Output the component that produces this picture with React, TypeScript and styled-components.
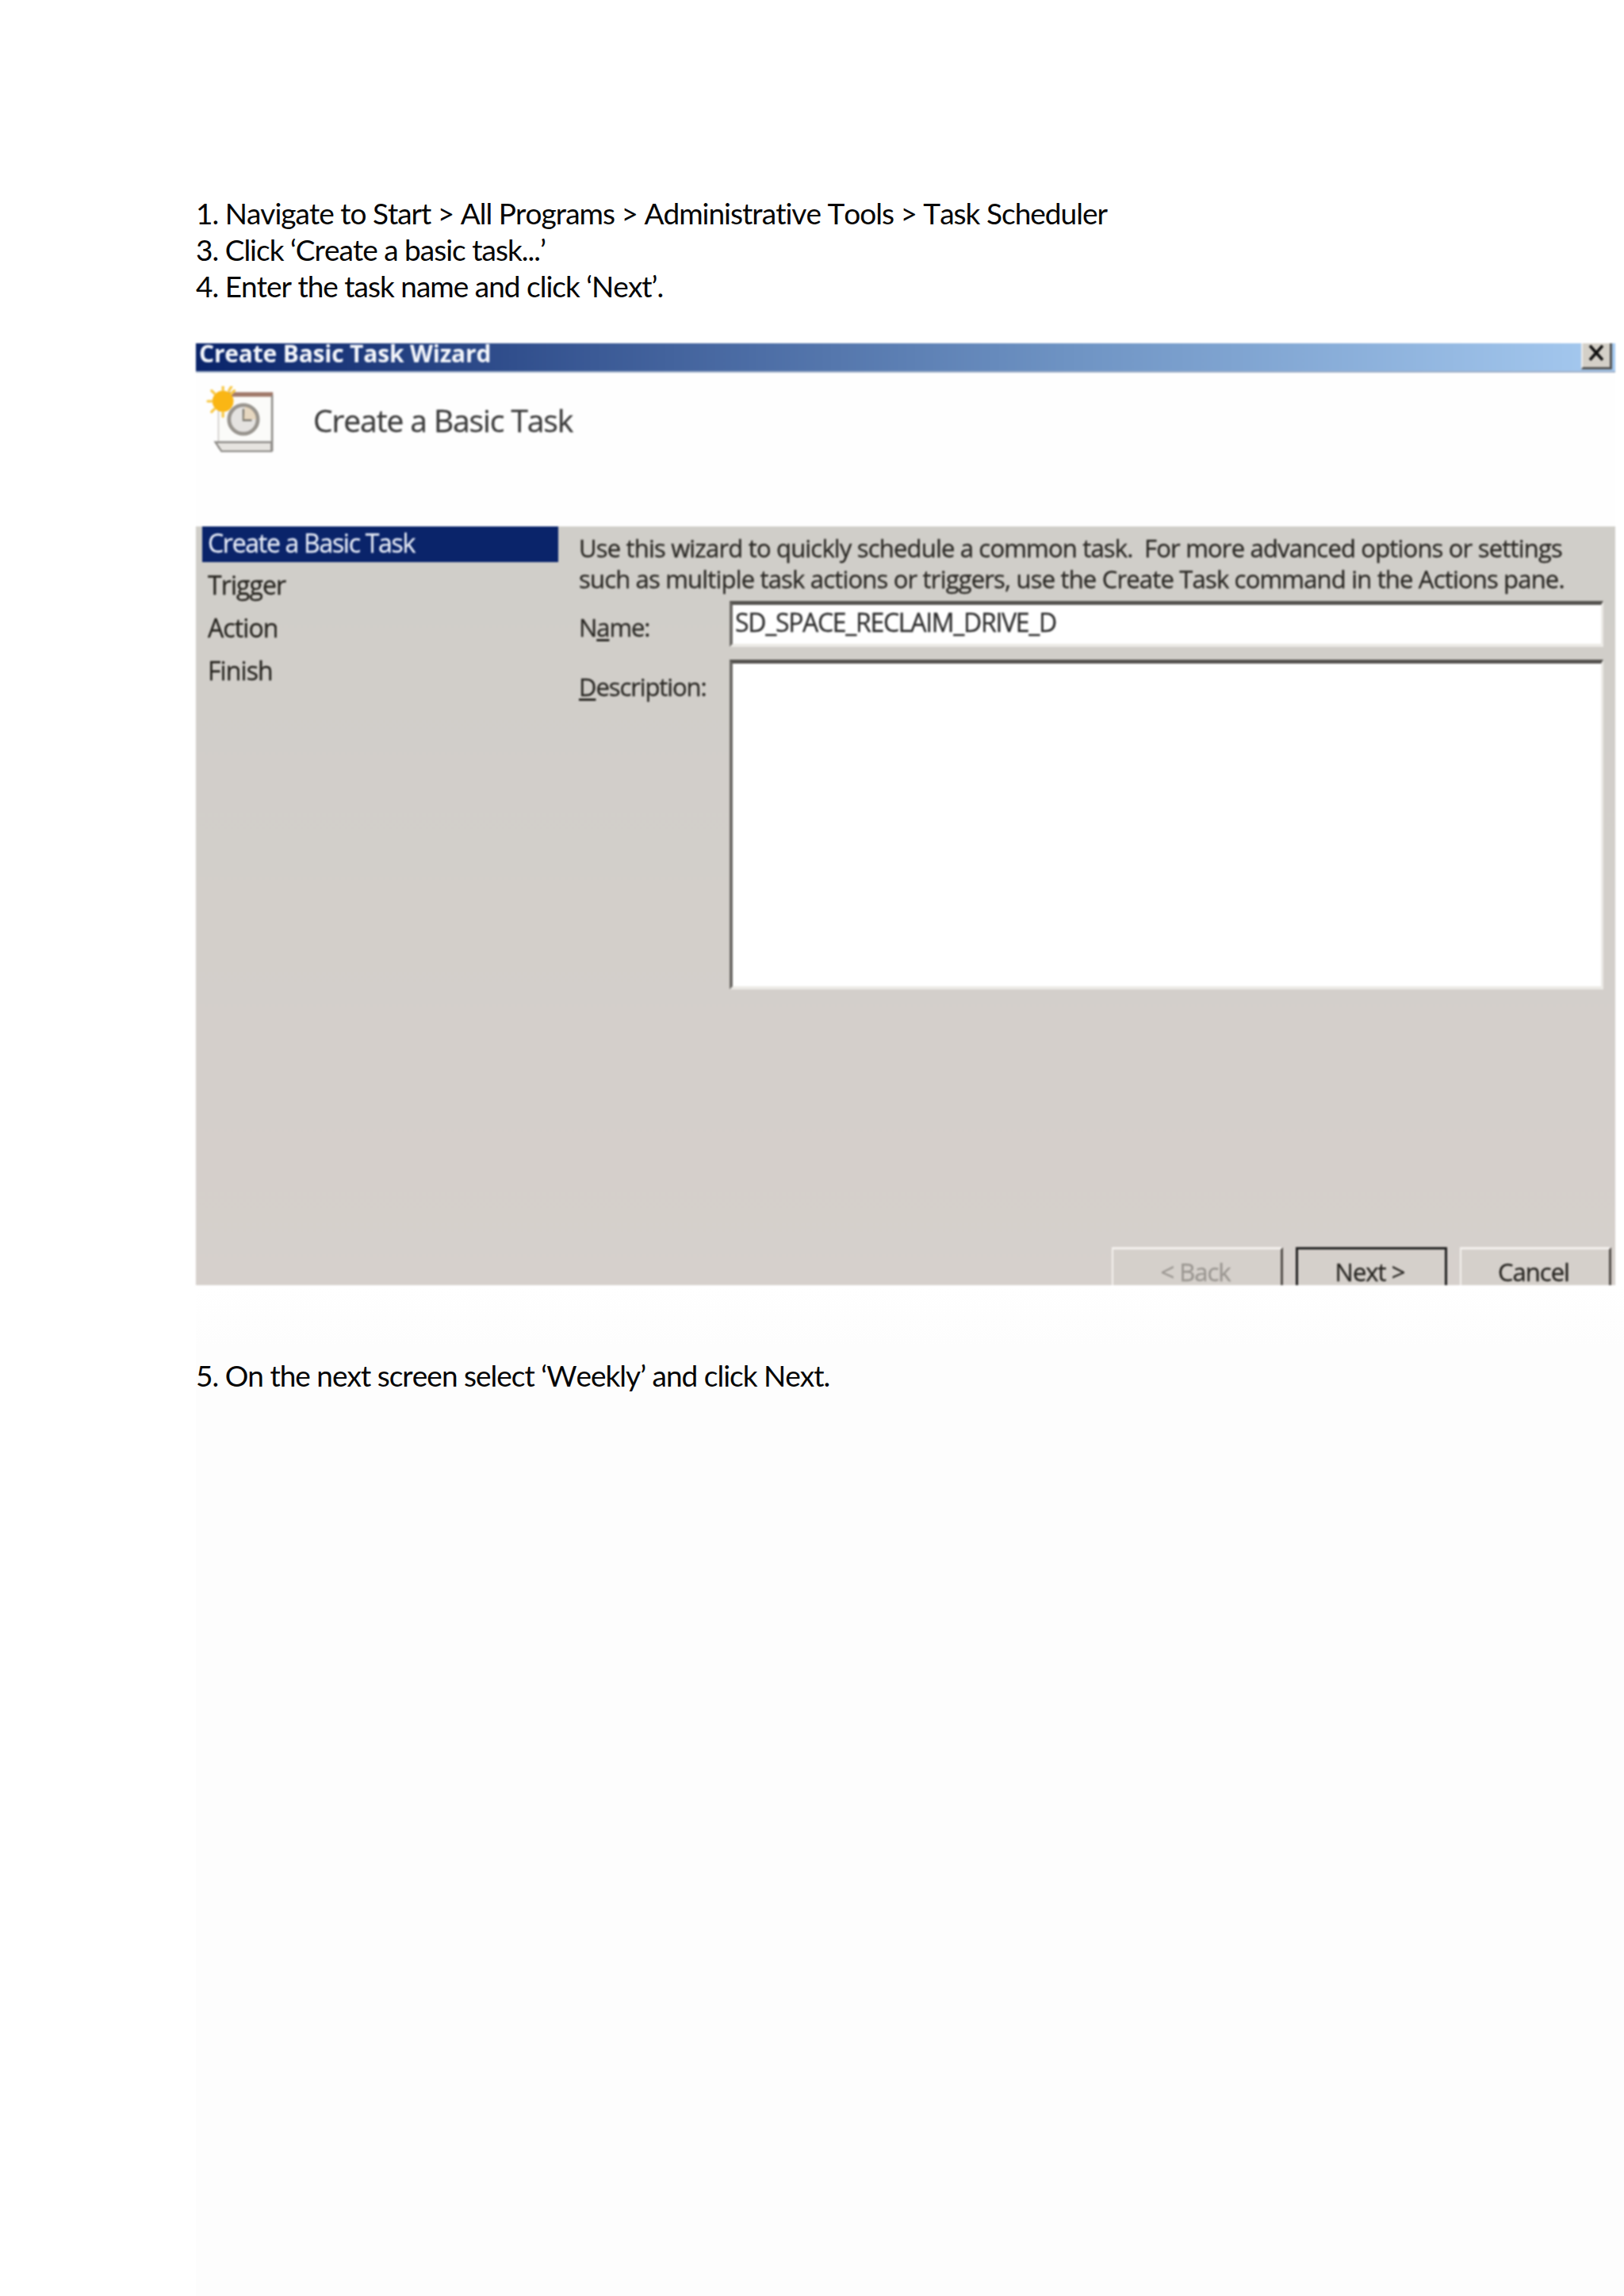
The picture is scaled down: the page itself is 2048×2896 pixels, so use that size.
import React from 'react';
import styled, { createGlobalStyle } from 'styled-components';

const GlobalStyle = createGlobalStyle`
  html, body { margin: 0; padding: 0; background: #ffffff; }
  body { font-family: "Lato", "Liberation Sans", sans-serif; color: #000; }
`;

const Page = styled.main`
  width: 2048px;
  height: 2896px;
  box-sizing: border-box;
  padding: 246px 11px 0 247px;
  overflow: hidden;
  background:
    linear-gradient(90deg, #ffffff 247px, transparent 247px),
    linear-gradient(#ffffff 1620px, #fdfdfd 1700px);
`;

const Steps = styled.div<{ $top?: number }>`
  display: flex;
  flex-direction: column;
  margin-top: ${(p) => p.$top ?? 0}px;
`;

const Step = styled.p`
  margin: 0;
  font-family: "Lato", "Liberation Sans", sans-serif;
  font-size: 37px;
  line-height: 46.2px;
  letter-spacing: -1px;
  font-kerning: none;
  font-variant-ligatures: none;
  color: #060606;
  white-space: pre;
`;

const Wizard = styled.section`
  width: 1790px;
  height: 1188px;
  margin-top: 48px;
  display: flex;
  flex-direction: column;
  overflow: hidden;
  background: #fefefe;
  font-family: "Open Sans", "Liberation Sans", sans-serif;
  filter: blur(0.9px);
`;

const TitleBar = styled.header`
  height: 37px;
  flex: none;
  display: flex;
  align-items: flex-start;
  justify-content: space-between;
  box-sizing: border-box;
  padding: 0 4px 0 4px;
  background: linear-gradient(90deg, #0a246a 0%, #3b5a96 28%, #6f94c4 62%, #a6caf0 100%);
  box-shadow: inset 0 -2px 0 #9fb0c8;
`;

const TitleText = styled.span`
  font-family: "Open Sans", "Liberation Sans", sans-serif;
  font-size: 30px;
  line-height: 26px;
  font-weight: 700;
  letter-spacing: -0.2px;
  color: #f4f6fb;
`;

const CloseButton = styled.button`
  width: 39px;
  height: 33px;
  margin: 0;
  padding: 0 0 6px;
  display: flex;
  align-items: center;
  justify-content: center;
  box-sizing: border-box;
  border: 0;
  border-right: 3px solid #555;
  border-bottom: 3px solid #555;
  border-left: 2px solid #eee;
  background: #d4d0c8;
`;

const Header = styled.div`
  height: 194px;
  flex: none;
  display: flex;
  align-items: flex-start;
  gap: 43px;
  box-sizing: border-box;
  padding: 17px 0 0 13px;
`;

const HeaderTitle = styled.h1`
  margin: 18px 0 0;
  font-family: "Open Sans", "Liberation Sans", sans-serif;
  font-size: 39px;
  line-height: 50px;
  font-weight: 400;
  letter-spacing: -1.1px;
  color: #3c3c3c;
  -webkit-text-stroke: 0.3px currentColor;
`;

const Body = styled.div`
  flex: 1;
  min-height: 0;
  display: grid;
  grid-template-columns: 457px 1fr;
  background: linear-gradient(#d0cec9, #d6d0cc);
  -webkit-text-stroke: 0.3px currentColor;
`;

const Sidebar = styled.nav`
  display: flex;
  flex-direction: column;
  padding-left: 8px;
`;

const SideItem = styled.div<{ $active?: boolean }>`
  width: 449px;
  height: ${(p) => (p.$active ? 45 : 54)}px;
  line-height: ${(p) => (p.$active ? 41 : 58)}px;
  box-sizing: border-box;
  padding-left: 7px;
  font-size: 32px;
  letter-spacing: ${(p) => (p.$active ? -1.3 : -0.9)}px;
  color: ${(p) => (p.$active ? '#e6ebf7' : '#26241f')};
  background: ${(p) => (p.$active ? '#0a246a' : 'transparent')};
`;

const Content = styled.div`
  display: flex;
  flex-direction: column;
  min-height: 0;
  padding: 8px 15px 0 26px;
`;

const Intro = styled.p`
  margin: 0;
  font-size: 31px;
  line-height: 39px;
  letter-spacing: -0.82px;
  color: #2a2824;
  white-space: pre;
`;

const Field = styled.div<{ $gap: number }>`
  display: grid;
  grid-template-columns: 190px 1fr;
  margin-top: ${(p) => p.$gap}px;
`;

const FieldLabel = styled.label<{ $pad: number }>`
  font-size: 31px;
  line-height: 40px;
  letter-spacing: -1.1px;
  color: #2a2824;
  padding-top: ${(p) => p.$pad}px;

  u { text-underline-offset: 3px; }
`;

const TextBox = styled.div<{ $height: number }>`
  height: ${(p) => p.$height}px;
  box-sizing: border-box;
  padding-left: 3px;
  border-top: 5px solid #55534f;
  border-left: 4px solid #6d6b67;
  border-right: 3px solid #eceae6;
  border-bottom: 4px solid #eceae6;
  background: #ffffff;
  font-size: 32px;
  line-height: 44px;
  letter-spacing: -1.3px;
  color: #2e2e2e;
`;

const Footer = styled.div`
  margin-top: auto;
  margin-right: -13px;
  display: flex;
  justify-content: flex-end;
  gap: 16px;
  height: 48px;
  padding-right: 3px;
`;

const WizardButton = styled.button<{ $width: number; $primary?: boolean; $disabled?: boolean }>`
  width: ${(p) => p.$width}px;
  height: 80px;
  flex: none;
  box-sizing: border-box;
  margin: 0;
  padding: 0 4px 17px 0;
  border-style: solid;
  border-width: ${(p) => (p.$primary ? '3px' : '3px 3px 3px 2px')};
  border-color: ${(p) => (p.$primary ? '#222' : '#f4f1ee #55504c #55504c #f4f1ee')};
  background: #d5d0cb;
  font-family: "Open Sans", "Liberation Sans", sans-serif;
  font-size: 31px;
  line-height: 40px;
  letter-spacing: -1px;
  color: ${(p) => (p.$disabled ? '#9b9792' : '#262420')};
`;

const TaskIcon = () => (
  <svg width="92" height="86" viewBox="0 0 92 90" style={{ flex: 'none' }} aria-hidden="true">
    <rect x="14" y="12" width="70" height="70" fill="#fbfbf9" stroke="#c9c7c2" strokeWidth="1.5" />
    <rect x="24" y="8" width="62" height="6" fill="#a0796a" />
    <path d="M10 74 L84 74 L84 86 L18 86 Z" fill="#e6e4e0" stroke="#8f8d89" strokeWidth="2.5" />
    <path d="M85 12 V86" stroke="#8f8d89" strokeWidth="2.5" />
    <circle cx="47" cy="44" r="19" fill="#e4e2e0" stroke="#98948e" strokeWidth="5" />
    <path d="M47 30 V45 H58" fill="none" stroke="#7d7a72" strokeWidth="2.5" />
    <path d="M49 27 A17 17 0 0 1 64 44 L47 44 Z" fill="#e8c998" opacity="0.45" />
    <circle cx="20" cy="20" r="14" fill="#fab614" />
    <g stroke="#f8c94a" strokeWidth="3.5" strokeLinecap="round">
      <path d="M20 0 V5" />
      <path d="M20 35 V40" />
      <path d="M0 20 H5" />
      <path d="M5 6 L9 10" />
      <path d="M35 6 L31 10" />
      <path d="M5 34 L9 30" />
      <path d="M31 1 L28 6" />
    </g>
  </svg>
);

const CloseGlyph = () => (
  <svg width="22" height="22" viewBox="0 0 22 22" aria-hidden="true">
    <path d="M3 2 L19 20 M19 2 L3 20" stroke="#111" strokeWidth="3.6" />
  </svg>
);

const App = () => (
  <>
    <GlobalStyle />
    <Page>
      <Steps>
        <Step>1. Navigate to Start {'>'} All Programs {'>'} Administrative Tools {'>'} Task Scheduler</Step>
        <Step>3. Click ‘Create a basic task...’</Step>
        <Step>4. Enter the task name and click ‘Next’.</Step>
      </Steps>
      <Wizard>
        <TitleBar>
          <TitleText>Create Basic Task Wizard</TitleText>
          <CloseButton aria-label="Close"><CloseGlyph /></CloseButton>
        </TitleBar>
        <Header>
          <TaskIcon />
          <HeaderTitle>Create a Basic Task</HeaderTitle>
        </Header>
        <Body>
          <Sidebar>
            <SideItem $active>Create a Basic Task</SideItem>
            <SideItem>Trigger</SideItem>
            <SideItem>Action</SideItem>
            <SideItem>Finish</SideItem>
          </Sidebar>
          <Content>
            <Intro>Use this wizard to quickly schedule a common task.  For more advanced options or settings{'\n'}such as multiple task actions or triggers, use the Create Task command in the Actions pane.</Intro>
            <Field $gap={8}>
              <FieldLabel $pad={13}>N<u>a</u>me:</FieldLabel>
              <TextBox $height={58}>SD_SPACE_RECLAIM_DRIVE_D</TextBox>
            </Field>
            <Field $gap={16}>
              <FieldLabel $pad={14}><u>D</u>escription:</FieldLabel>
              <TextBox $height={416} />
            </Field>
            <Footer>
              <WizardButton $width={216} $disabled>{'<'} Back</WizardButton>
              <WizardButton $width={191} $primary>Next {'>'}</WizardButton>
              <WizardButton $width={191}>Cancel</WizardButton>
            </Footer>
          </Content>
        </Body>
      </Wizard>
      <Steps $top={91}>
        <Step>5. On the next screen select ‘Weekly’ and click Next.</Step>
      </Steps>
    </Page>
  </>
);

export default App;
